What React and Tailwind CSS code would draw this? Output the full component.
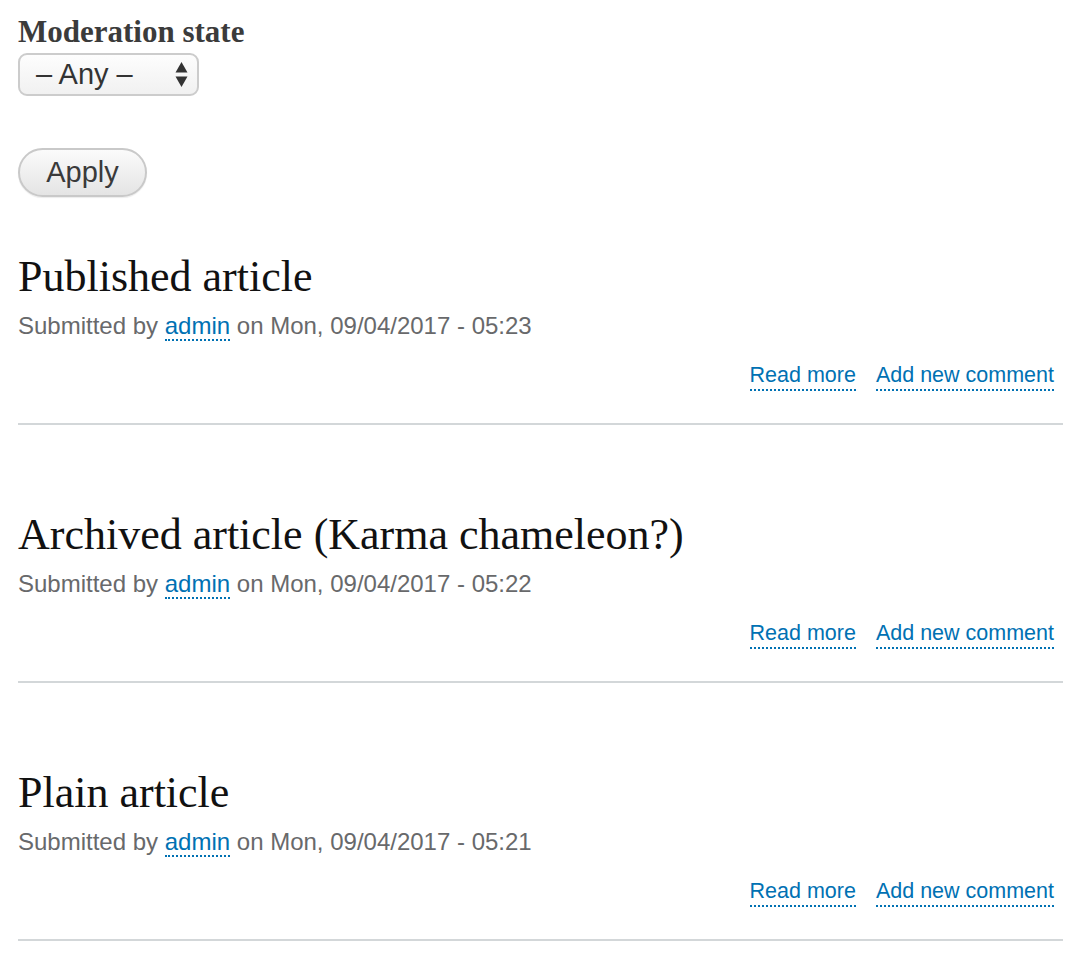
import React from 'react';

const articles = [
    { title: "Published article", date: "Mon, 09/04/2017 - 05:23" },
    { title: "Archived article (Karma chameleon?)", date: "Mon, 09/04/2017 - 05:22" },
    { title: "Plain article", date: "Mon, 09/04/2017 - 05:21" },
];

const serif = "font-['Liberation_Serif',Georgia,serif]";
const sans = "font-['Liberation_Sans',Arial,sans-serif]";

const Link = ({ children }) => (
    <a href="#" className="text-[#0071b3] border-b-2 border-dotted border-[#0071b3] no-underline">
        {children}
    </a>
);

export default function App() {
    return (
        <div className="bg-white min-h-screen pl-[18px] pr-[13px] pt-[14px] pb-10">
            {/* Filter form */}
            <div>
                <label className={`${serif} block font-bold text-[31px] leading-[36px] text-[#3b3b3b]`}>
                    Moderation state
                </label>
                <div className={`${sans} mt-[3px] w-[181px] h-[43px] flex items-center justify-between pl-[16px] pr-[9px] border-2 border-[#cccccc] rounded-[9px] bg-gradient-to-b from-[#fdfdfd] to-[#f1f1f1] text-[29px] text-[#333]`}>
                    <span>– Any –</span>
                    <svg width="13" height="25" viewBox="0 0 13 25" className="shrink-0">
                        <path d="M6.5 0 L12.5 10.5 L0.5 10.5 Z" fill="#333" />
                        <path d="M0.5 14.5 L12.5 14.5 L6.5 25 Z" fill="#333" />
                    </svg>
                </div>
                <button className={`${sans} mt-[52px] w-[129px] h-[49px] rounded-full border-2 border-[#c9c9c9] bg-gradient-to-b from-[#fbfbfb] to-[#e4e4e4] text-[29px] text-[#3a3a3a] shadow-[0_1px_1px_rgba(0,0,0,0.08)]`}>
                    Apply
                </button>
            </div>

            {/* Article list */}
            <div className="mt-[55px]">
                {articles.map((a, i) => (
                    <article key={i} className={i > 0 ? "mt-[85px]" : ""}>
                        <h2 className={`${serif} text-[44px] leading-[50px] text-[#111]`}>{a.title}</h2>
                        <div className={`${sans} mt-[10px] text-[24px] leading-[28px] text-[#68696b]`}>
                            Submitted by <Link>admin</Link> on {a.date}
                        </div>
                        <div className={`${sans} mt-[21px] flex justify-end gap-[20px] pr-[9px] text-[21.5px] leading-[28px]`}>
                            <Link>Read more</Link>
                            <Link>Add new comment</Link>
                        </div>
                        <div className="mt-[32px] h-[2px] bg-[#d3d7d9]" />
                    </article>
                ))}
            </div>
        </div>
    );
}
